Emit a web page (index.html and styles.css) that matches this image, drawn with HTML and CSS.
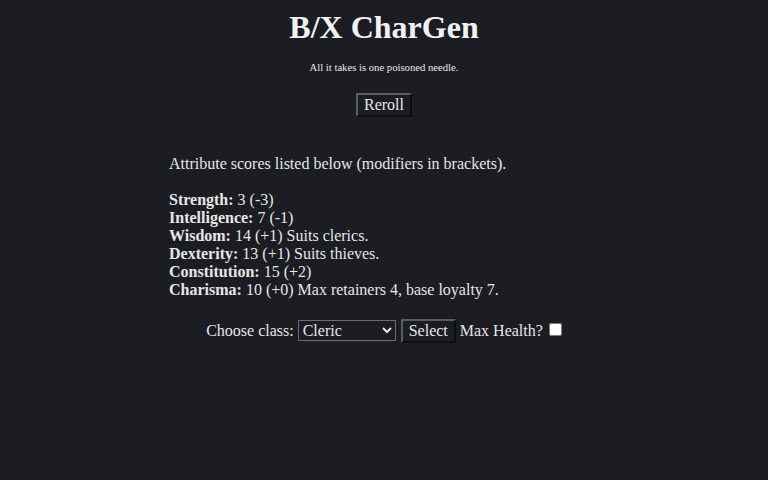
FILE: index.html
```html
<!DOCTYPE html>
<html lang="en">
<head>
    <meta charset="UTF-8">
    <meta name="viewport" content="width=device-width, initial-scale=1.0">
    <title>B/X CharGen</title>
    <link rel="stylesheet" href="styles.css">
</head>
<body>
    <header class="masthead">
        <h1>B/X CharGen</h1>
        <p class="tagline">All it takes is one poisoned needle.</p>
        <button class="btn" id="reroll">Reroll</button>
    </header>

    <main class="sheet">
        <p class="intro">Attribute scores listed below (modifiers in brackets).</p>
        <ul class="stats">
            <li><b>Strength:</b> 3 (-3)</li>
            <li><b>Intelligence:</b> 7 (-1)</li>
            <li><b>Wisdom:</b> 14 (+1) Suits clerics.</li>
            <li><b>Dexterity:</b> 13 (+1) Suits thieves.</li>
            <li><b>Constitution:</b> 15 (+2)</li>
            <li><b>Charisma:</b> 10 (+0) Max retainers 4, base loyalty 7.</li>
        </ul>

        <form class="class-form">
            <label for="class-select">Choose class:</label>
            <select id="class-select">
                <option>Cleric</option>
                <option>Fighter</option>
                <option>Magic-User</option>
                <option>Thief</option>
                <option>Dwarf</option>
                <option>Elf</option>
                <option>Halfling</option>
            </select>
            <button type="button" class="btn">Select</button>
            <label for="max-hp">Max Health?</label>
            <input type="checkbox" id="max-hp">
        </form>
    </main>
</body>
</html>
```

FILE: styles.css
```css
body {
    margin: 0;
    padding-top: 9px;
    background-color: #1c1d23;
    color: #e6e6e6;
    font-family: "Liberation Serif", "Times New Roman", serif;
    font-size: 16px;
}
.masthead {
    text-align: center;
}
h1 {
    margin: 0;
    font-size: 32px;
    color: #f2f2f2;
}
.tagline {
    margin: 15px 0 20px;
    font-size: 10.67px;
}
.btn {
    font-family: inherit;
    font-size: 16px;
    color: #e6e6e6;
    background-color: #1c1d23;
    border: 2px outset #5a5c62;
    padding: 1px 6px;
}
.sheet {
    max-width: 430px;
    margin: 0 auto;
}
.intro {
    margin: 38px 0 18px;
}
.stats {
    list-style: none;
    margin: 0;
    padding: 0;
}
.stats li {
    line-height: 18px;
}
.class-form {
    margin-top: 20px;
    text-align: center;
}
select {
    width: 98px;
    font-family: inherit;
    font-size: 16px;
    color: #e6e6e6;
    background-color: #1c1d23;
    border: 1px solid #6b6d72;
    color-scheme: dark;
}
.class-form .btn {
    margin-left: 1px;
}
input[type="checkbox"] {
    margin: 0 0 0 2px;
    width: 13px;
    height: 13px;
}
```
